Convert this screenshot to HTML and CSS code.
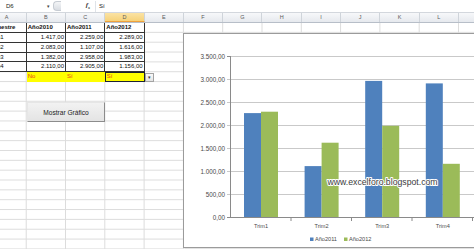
FILE: index.html
```html
<!DOCTYPE html>
<html>
    <head>
        <meta charset="UTF-8">
        <title>Mostrar Gráfico</title>
        <link rel="stylesheet" href="styles.css">
    </head>

    <body>
        <div class="formula-bar">
            <div class="name-box">D6<span class="name-arrow">▾</span></div>
            <div class="bar-split">
                <span class="split-handle"></span>
                <span class="fx">f<sub>x</sub></span>
            </div>
            <div class="formula-input">Sí</div>
        </div>

        <div class="col-headers">
            <div class="col-head">A</div>
            <div class="col-head">B</div>
            <div class="col-head">C</div>
            <div class="col-head selected">D</div>
            <div class="col-head">E</div>
            <div class="col-head">F</div>
            <div class="col-head">G</div>
            <div class="col-head">H</div>
            <div class="col-head">I</div>
            <div class="col-head">J</div>
            <div class="col-head">K</div>
            <div class="col-head">L</div>
            <div class="col-head">M</div>
        </div>

        <div class="sheet-body">
            <div class="data-grid">
                <div class="cell head">Trimestre</div>
                <div class="cell head">Año2010</div>
                <div class="cell head">Año2011</div>
                <div class="cell head">Año2012</div>

                <div class="cell">Trim1</div>
                <div class="cell num">1.417,00</div>
                <div class="cell num">2.259,00</div>
                <div class="cell num">2.289,00</div>

                <div class="cell">Trim2</div>
                <div class="cell num">2.083,00</div>
                <div class="cell num">1.107,00</div>
                <div class="cell num">1.616,00</div>

                <div class="cell">Trim3</div>
                <div class="cell num">1.382,00</div>
                <div class="cell num">2.958,00</div>
                <div class="cell num">1.983,00</div>

                <div class="cell">Trim4</div>
                <div class="cell num">2.110,00</div>
                <div class="cell num">2.905,00</div>
                <div class="cell num">1.156,00</div>

                <div class="cell blank"></div>
                <div class="cell flag">No</div>
                <div class="cell flag">Sí</div>
                <div class="cell flag active">Sí<span class="list-button">▾</span></div>
            </div>

            <button class="show-chart">Mostrar Gráfico</button>

            <div class="chart">
                <svg class="chart-svg" width="291" height="217" viewBox="0 0 291 217">
                    <rect class="chart-shadow" x="2" y="215" width="291" height="2"/>
                    <rect class="chart-frame" x="0.5" y="0.5" width="300" height="214"/>

                    <g class="grid">
                        <line x1="44" y1="23.5" x2="291" y2="23.5"/>
                        <line x1="44" y1="46.5" x2="291" y2="46.5"/>
                        <line x1="44" y1="69.5" x2="291" y2="69.5"/>
                        <line x1="44" y1="92.5" x2="291" y2="92.5"/>
                        <line x1="44" y1="115.5" x2="291" y2="115.5"/>
                        <line x1="44" y1="138.5" x2="291" y2="138.5"/>
                        <line x1="44" y1="161.5" x2="291" y2="161.5"/>
                    </g>

                    <g class="y-labels">
                        <text x="42" y="25.7">3.500,00</text>
                        <text x="42" y="48.7">3.000,00</text>
                        <text x="42" y="71.7">2.500,00</text>
                        <text x="42" y="94.7">2.000,00</text>
                        <text x="42" y="117.7">1.500,00</text>
                        <text x="42" y="140.7">1.000,00</text>
                        <text x="42" y="163.7">500,00</text>
                        <text x="42" y="186.7">0,00</text>
                    </g>

                    <g class="bars-2011">
                        <rect x="61" y="80.1" width="17" height="103.9"/>
                        <rect x="121.6" y="133.1" width="17" height="50.9"/>
                        <rect x="182.2" y="47.9" width="17" height="136.1"/>
                        <rect x="242.8" y="50.4" width="17" height="133.6"/>
                    </g>
                    <g class="bars-2012">
                        <rect x="78" y="78.7" width="17" height="105.3"/>
                        <rect x="138.6" y="109.7" width="17" height="74.3"/>
                        <rect x="199.2" y="92.8" width="17" height="91.2"/>
                        <rect x="259.8" y="130.8" width="17" height="53.2"/>
                    </g>

                    <g class="axis">
                        <line x1="47.5" y1="23" x2="47.5" y2="185"/>
                        <line x1="44" y1="184.5" x2="291" y2="184.5"/>
                        <line x1="44" y1="23.5" x2="47" y2="23.5"/>
                        <line x1="108" y1="184" x2="108" y2="188"/>
                        <line x1="168.5" y1="184" x2="168.5" y2="188"/>
                        <line x1="229" y1="184" x2="229" y2="188"/>
                        <line x1="289.5" y1="184" x2="289.5" y2="188"/>
                    </g>

                    <g class="x-labels">
                        <text x="78" y="195">Trim1</text>
                        <text x="138.6" y="195">Trim2</text>
                        <text x="199.2" y="195">Trim3</text>
                        <text x="259.8" y="195">Trim4</text>
                    </g>

                    <g class="legend">
                        <rect class="key-2011" x="127" y="204.5" width="3.5" height="3.5"/>
                        <text x="132" y="208">Año2011</text>
                        <rect class="key-2012" x="161" y="204.5" width="3.5" height="3.5"/>
                        <text x="166" y="208">Año2012</text>
                    </g>

                    <text class="watermark" x="199.5" y="152">www.excelforo.blogspot.com</text>
                </svg>
            </div>
        </div>
    </body>
</html>
```

FILE: styles.css
```css
body {
    margin: 0;
    width: 474px;
    height: 249px;
    overflow: hidden;
    background-color: white;
    font-family: "Liberation Sans", Arial, sans-serif;
}

/* formula bar */

.formula-bar {
    display: flex;
    align-items: center;
    height: 12px;
    border-bottom: 1px solid #d3d7dd;
    font-size: 6px;
    color: #222;
}

.name-box {
    display: flex;
    justify-content: space-between;
    width: 53px;
    box-sizing: border-box;
    padding-left: 6px;
    padding-right: 3px;
    line-height: 11px;
}

.name-arrow {
    font-size: 5px;
    color: #444;
}

.bar-split {
    display: flex;
    align-items: center;
    justify-content: space-between;
    width: 43px;
    height: 11px;
    box-sizing: border-box;
    padding-right: 5px;
    border-right: 1px solid #dfe3e8;
}

.split-handle {
    width: 7px;
    height: 8px;
    border-radius: 4px 0 0 4px;
    background: linear-gradient(#f4f5f7, #d9dde3);
    border: 1px solid #c7ccd3;
    border-right: none;
}

.fx {
    font-family: "Liberation Serif", serif;
    font-style: italic;
    font-weight: bold;
    font-size: 7px;
    color: #333;
}

.fx sub {
    font-size: 4px;
}

.formula-input {
    padding-left: 3px;
    line-height: 11px;
}

/* column headers */

.col-headers {
    display: flex;
    margin-left: -12.6px;
    height: 9px;
    border-bottom: 1px solid #b7bec8;
}

.col-head {
    flex: none;
    width: 39.3px;
    box-sizing: border-box;
    border-right: 1px solid #cfd4da;
    background: linear-gradient(#f7f8fa, #e6e9ee);
    text-align: center;
    font-size: 5.5px;
    line-height: 9px;
    color: #5b5b5b;
}

.col-head.selected {
    background: linear-gradient(#fbe3a4, #f6d27a);
    border-bottom: 1px solid #f0a23c;
}

/* sheet */

.sheet-body {
    position: relative;
    height: 227px;
    overflow: hidden;
    background-image:
        linear-gradient(to right, transparent 38.3px, #dcdcdc 38.3px),
        linear-gradient(to bottom, transparent 8.85px, #dcdcdc 8.85px);
    background-size: 39.3px 100%, 100% 9.85px;
    background-position: -12.6px 0, 0 0;
}

.data-grid {
    display: grid;
    grid-template-columns: repeat(4, 39.3px);
    grid-auto-rows: 9.85px;
    width: fit-content;
    margin-left: -12.6px;
}

.cell {
    box-sizing: border-box;
    padding: 0 1px;
    border-right: 1px solid #333;
    border-bottom: 1px solid #333;
    background-color: white;
    font-size: 6px;
    line-height: 9px;
    white-space: nowrap;
    color: #111;
}

.cell.head {
    font-weight: bold;
}

.cell.num {
    text-align: right;
}

.cell.blank {
    border: none;
    background: none;
}

.cell.flag {
    border: none;
    background-color: #ffff00;
    color: #e8461c;
}

.cell.active {
    position: relative;
    border: 1.5px solid #1d2233;
    line-height: 7px;
    padding-left: 0.5px;
}

.list-button {
    position: absolute;
    left: calc(100% + 1.5px);
    top: 0;
    width: 7px;
    height: 7px;
    border: 1px solid #a3a3a3;
    background: linear-gradient(#fafafa, #e4e4e4);
    color: #333;
    font-size: 5px;
    line-height: 7px;
    text-align: center;
}

.show-chart {
    position: absolute;
    left: 27px;
    top: 79px;
    width: 78px;
    height: 20px;
    padding: 0;
    border: 1px solid #e6e6e6;
    border-right-color: #8c8c8c;
    border-bottom-color: #8c8c8c;
    background: linear-gradient(#f2f2f2, #e4e4e4);
    font-family: "Liberation Sans", Arial, sans-serif;
    font-size: 6.6px;
    color: #222;
}

/* chart */

.chart {
    position: absolute;
    left: 183px;
    top: 10px;
}

.chart-svg {
    display: block;
    font-family: "Liberation Sans", Arial, sans-serif;
}

.chart-frame {
    fill: white;
    stroke: #9b9b9b;
}

.chart-shadow {
    fill: #e2e2e2;
}

.grid line {
    stroke: #c9c9c9;
    stroke-width: 1;
}

.axis line {
    stroke: #8a8a8a;
    stroke-width: 1;
}

.y-labels text {
    text-anchor: end;
    font-size: 6.3px;
    fill: #4a4a4a;
}

.x-labels text {
    text-anchor: middle;
    font-size: 5.6px;
    fill: #4a4a4a;
}

.legend text {
    font-size: 5.6px;
    fill: #4a4a4a;
}

.bars-2011 rect,
.key-2011 {
    fill: #4f81bd;
}

.bars-2012 rect,
.key-2012 {
    fill: #9bbb59;
}

.watermark {
    text-anchor: middle;
    font-size: 8.7px;
    fill: #3c3c3c;
    stroke: white;
    stroke-width: 2px;
    stroke-linejoin: round;
    paint-order: stroke;
}
```
